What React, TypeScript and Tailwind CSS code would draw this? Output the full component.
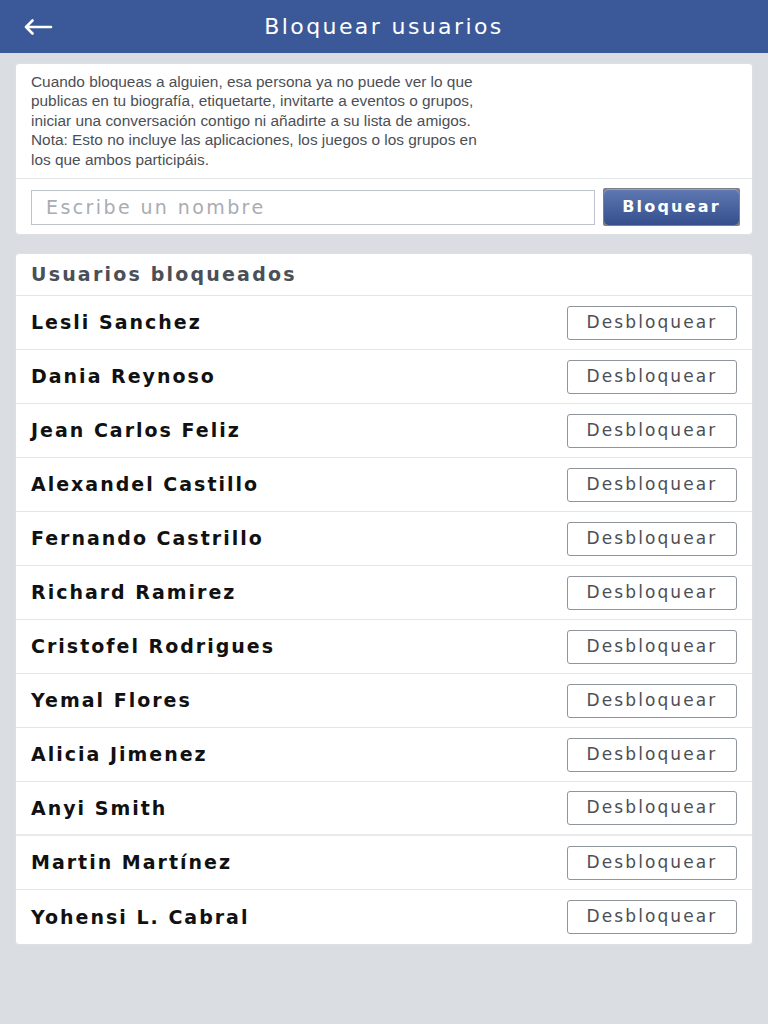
import React from "react";

const names = [
  "Lesli Sanchez",
  "Dania Reynoso",
  "Jean Carlos Feliz",
  "Alexandel Castillo",
  "Fernando Castrillo",
  "Richard Ramirez",
  "Cristofel Rodrigues",
  "Yemal Flores",
  "Alicia Jimenez",
  "Anyi Smith",
  "Martin Martínez",
  "Yohensi L. Cabral",
];

export default function App() {
  return (
    <div className="min-h-[1024px] w-[768px] bg-[#dadde2] font-['DejaVu_Sans',sans-serif]">
      <header className="relative flex h-[53px] items-center justify-center bg-[#3b5998]">
        <button className="absolute left-[22px] top-[15px] flex h-[24px] w-[32px] items-center justify-center">
          <svg width="30" height="16" viewBox="0 0 30 16" fill="none">
            <path d="M28 8H3M9.5 1.5L3 8l6.5 6.5" stroke="white" strokeWidth="2.6" strokeLinecap="round" strokeLinejoin="round" />
          </svg>
        </button>
        <h1 className="text-[22px] tracking-[2.4px] text-white">Bloquear usuarios</h1>
      </header>

      <div className="flex flex-col gap-[18px] px-[15px] pt-[10px]">
        <section className="rounded-[4px] border border-[#dddfe2] bg-white">
          <p className="px-[15px] pb-[9px] pt-[8px] font-['Liberation_Sans',Arial,sans-serif] text-[15.4px] leading-[19.4px] tracking-[0px] text-[#4b4f56]">
            Cuando bloqueas a alguien, esa persona ya no puede ver lo que
            <br />
            publicas en tu biografía, etiquetarte, invitarte a eventos o grupos,
            <br />
            iniciar una conversación contigo ni añadirte a su lista de amigos.
            <br />
            Nota: Esto no incluye las aplicaciones, los juegos o los grupos en
            <br />
            los que ambos participáis.
          </p>
          <div className="flex items-center gap-[8px] border-t border-[#e5e6e9] pb-[8px] pl-[15px] pr-[12px] pt-[9px]">
            <div className="flex h-[35px] w-[564px] shrink-0 items-center border border-[#bec2c9] px-[14px] text-[19px] tracking-[2.4px] text-[#a8acb3]">
              Escribe un nombre
            </div>
            <div className="shrink-0 rounded-[2px] bg-[#7d7f82] p-[1px]">
              <button className="flex h-[36px] w-[135px] items-center justify-center rounded-[5px] bg-gradient-to-b from-[#6079b4] to-[#344f8c] text-[16px] font-bold tracking-[2.2px] text-white shadow-[inset_0_1px_0_rgba(255,255,255,0.3)]">
                Bloquear
              </button>
            </div>
          </div>
        </section>

        <section className="overflow-hidden rounded-[4px] border border-[#dddfe2] bg-white">
          <div className="flex h-[42px] items-center border-b border-[#e5e6e9] px-[15px] text-[19px] font-bold tracking-[2.2px] text-[#4b4f56]">
            Usuarios bloqueados
          </div>
          {names.map((n, i) => (
            <div
              key={n}
              className={`flex h-[54px] items-center justify-between pl-[15px] pr-[15px] ${
                i < names.length - 1 ? (i === 9 ? "border-b-2 border-[#e9eaed]" : "border-b border-[#e5e6e9]") : ""
              }`}
            >
              <span className="text-[19px] font-bold tracking-[2px] text-[#111111]">{n}</span>
              <button className="flex h-[34px] w-[170px] items-center justify-center rounded-[3px] border border-[#8f949d] text-[17px] tracking-[2.1px] text-[#4b4f56]">
                Desbloquear
              </button>
            </div>
          ))}
        </section>
      </div>
    </div>
  );
}
